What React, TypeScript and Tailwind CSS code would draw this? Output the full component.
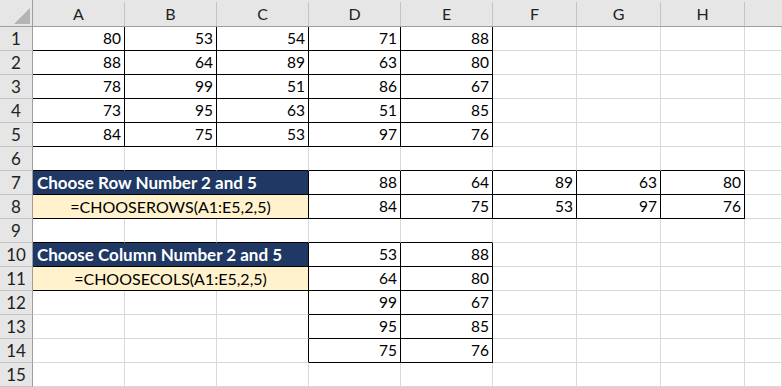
import React from "react";

type Cell = { text?: string; align?: "left" | "right" | "center"; span?: number; kind?: "title" | "formula" };

const COLS = ["A", "B", "C", "D", "E", "F", "G", "H", ""];

const num = (v: number): Cell => ({ text: String(v), align: "right" });
const empty = (): Cell => ({});

const source = [
  [80, 53, 54, 71, 88],
  [88, 64, 89, 63, 80],
  [78, 99, 51, 86, 67],
  [73, 95, 63, 51, 85],
  [84, 75, 53, 97, 76],
];

const colPick = [
  [53, 88],
  [64, 80],
  [99, 67],
  [95, 85],
  [75, 76],
];

// Build each row as a list of cells (merged cells use span)
function buildRows(): Cell[][] {
  const rows: Cell[][] = [];
  for (let r = 0; r < 15; r++) {
    const rowNo = r + 1;
    const cells: Cell[] = [];
    if (rowNo <= 5) {
      source[r].forEach((v) => cells.push(num(v)));
      for (let i = 0; i < 4; i++) cells.push(empty());
    } else if (rowNo === 7) {
      cells.push({ text: "Choose Row Number 2 and 5", align: "left", span: 3, kind: "title" });
      [88, 64, 89, 63, 80].forEach((v) => cells.push(num(v)));
      cells.push(empty());
    } else if (rowNo === 8) {
      cells.push({ text: "=CHOOSEROWS(A1:E5,2,5)", align: "center", span: 3, kind: "formula" });
      [84, 75, 53, 97, 76].forEach((v) => cells.push(num(v)));
      cells.push(empty());
    } else if (rowNo === 10 || rowNo === 11) {
      cells.push(
        rowNo === 10
          ? { text: "Choose Column Number 2 and 5", align: "left", span: 3, kind: "title" }
          : { text: "=CHOOSECOLS(A1:E5,2,5)", align: "center", span: 3, kind: "formula" }
      );
      colPick[rowNo - 10].forEach((v) => cells.push(num(v)));
      for (let i = 0; i < 4; i++) cells.push(empty());
    } else if (rowNo >= 12 && rowNo <= 14) {
      for (let i = 0; i < 3; i++) cells.push(empty());
      colPick[rowNo - 10].forEach((v) => cells.push(num(v)));
      for (let i = 0; i < 4; i++) cells.push(empty());
    } else {
      for (let i = 0; i < 9; i++) cells.push(empty());
    }
    rows.push(cells);
  }
  return rows;
}

// Cells that carry thin black borders (row index 0-based, col index 0-based)
function boxed(r: number, c: number): boolean {
  if (r < 0 || c < 0) return false;
  if (r <= 4 && c <= 4) return true;
  if ((r === 6 || r === 7) && c <= 7) return true;
  if ((r === 9 || r === 10) && c <= 2) return true;
  if (r >= 9 && r <= 13 && (c === 3 || c === 4)) return true;
  return false;
}

function Corner() {
  return (
    <div className="bg-[#e6e6e6] border-r border-b border-r-[#9e9e9e] border-b-[#9e9e9e] flex items-start">
      <svg width="32" height="26" viewBox="0 0 32 26">
        <polygon points="14,24 30,8 30,24" fill="#b4b4b4" />
      </svg>
    </div>
  );
}

function ColHeader({ label, last }: { label: string; last?: boolean }) {
  return (
    <div className="bg-[#e6e6e6] border-b border-b-[#9e9e9e] flex flex-col">
      <div className="h-[4px]" />
      <div
        className={
          last
            ? "flex-1 flex items-center justify-center text-[16px] text-[#222]"
            : "flex-1 flex items-center justify-center text-[16px] text-[#222] border-r border-r-[#c4c4c4]"
        }
      >
        {label}
      </div>
    </div>
  );
}

function RowHeader({ n }: { n: number }) {
  return (
    <div className="bg-[#e6e6e6] border-r border-b border-r-[#9e9e9e] border-b-[#c4c4c4] flex items-end justify-center pb-[2px] text-[17px] text-[#222] leading-[19px]">
      {n}
    </div>
  );
}

export default function App() {
  const rows = buildRows();
  return (
    <div
      className="w-[782px] h-[387px] overflow-hidden bg-white"
      style={{ fontFamily: "Lato, 'Open Sans', sans-serif" }}
    >
      <div className="grid grid-cols-[33px_repeat(5,92px)_repeat(3,84px)_1fr] grid-rows-[27px_repeat(15,24px)]">
        <Corner />
        {COLS.map((c, i) => (
          <ColHeader key={i} label={c} last={i === COLS.length - 1} />
        ))}
        {rows.map((cells, r) => {
          let c = 0;
          return (
            <React.Fragment key={r}>
              <RowHeader n={r + 1} />
              {cells.map((cell, k) => {
                const span = cell.span ?? 1;
                const startCol = c;
                c += span;
                const endCol = c - 1;
                let blackRight = false;
                let blackBottom = false;
                for (let x = startCol; x <= endCol; x++) {
                  if (boxed(r, x) || boxed(r + 1, x)) blackBottom = true;
                }
                if (boxed(r, endCol) || boxed(r, endCol + 1)) blackRight = true;

                const right = blackRight ? "border-r-black" : "border-r-[#d9d9d9]";
                const bottom = blackBottom ? "border-b-black" : "border-b-[#d9d9d9]";
                const look =
                  cell.kind === "title"
                    ? "bg-[#203864] text-white font-bold text-[17px]"
                    : cell.kind === "formula"
                    ? "bg-[#fff2cc] text-black text-[16px]"
                    : "text-black text-[15.5px]";
                const justify =
                  cell.align === "right" ? "justify-end pr-[3px]" : cell.align === "center" ? "justify-center" : "justify-start pl-[4px]";
                const spanCls = span === 3 ? "col-span-3" : "";
                return (
                  <div
                    key={k}
                    className={`border-r border-b ${right} ${bottom} ${look} ${spanCls} flex items-end pb-[2px] ${justify} leading-[19px] whitespace-nowrap overflow-hidden`}
                  >
                    {cell.text}
                  </div>
                );
              })}
            </React.Fragment>
          );
        })}
      </div>
    </div>
  );
}
